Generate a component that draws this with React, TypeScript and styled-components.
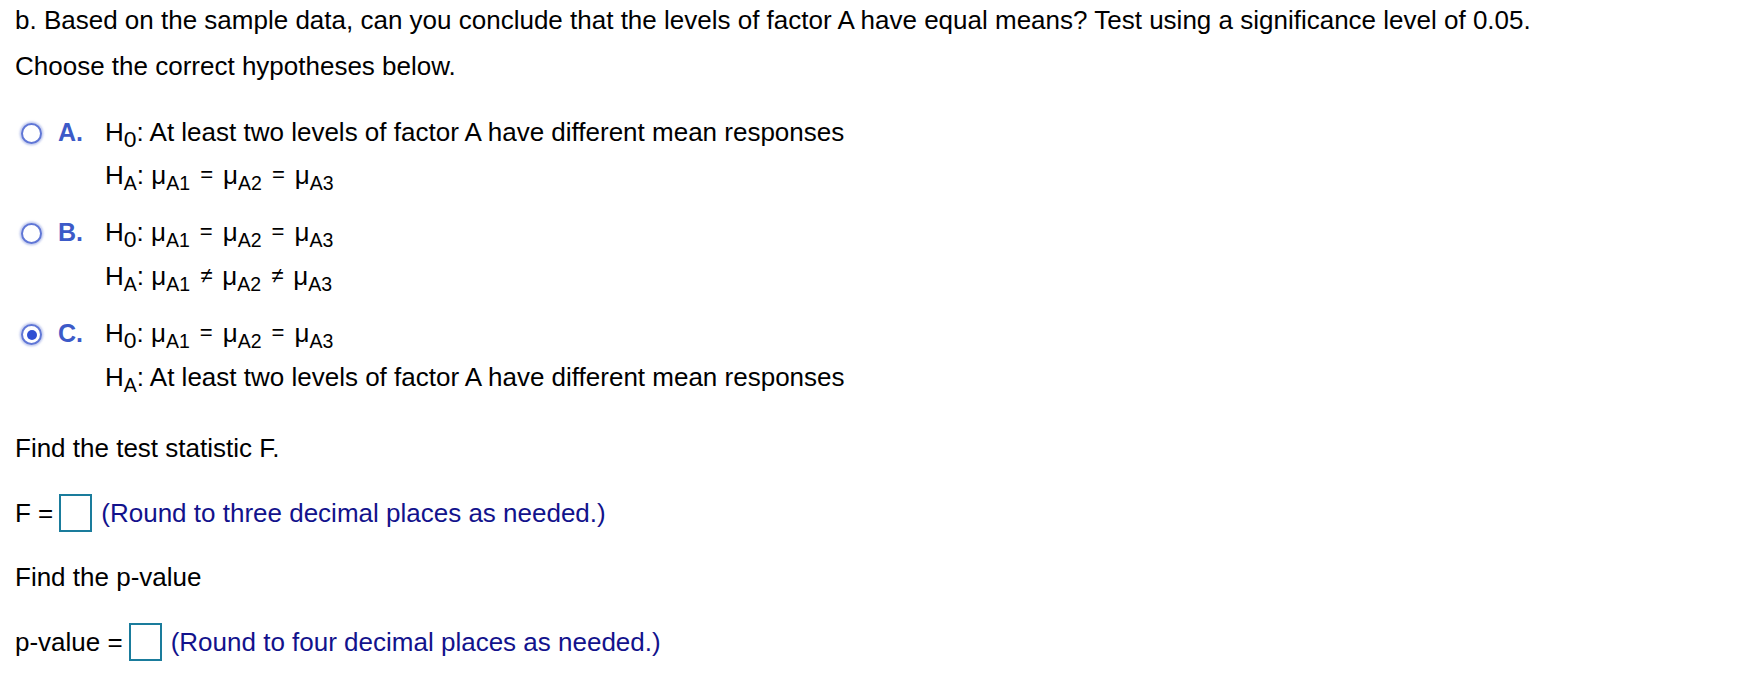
import React from "react";
import styled, { createGlobalStyle } from "styled-components";

const Global = createGlobalStyle`
  html, body { margin: 0; padding: 0; background: #ffffff; }
  body { font-family: "Liberation Sans", Arial, Helvetica, sans-serif; color: #000; }
`;

const Page = styled.div`
  display: flex;
  flex-direction: column;
  padding: 5px 0 0 15px;
  font-size: 26px;
  line-height: 30px;
`;

const Para = styled.div<{ $mt?: number }>`
  margin-top: ${(p) => p.$mt ?? 0}px;
  white-space: nowrap;
`;

const Options = styled.div`
  display: flex;
  flex-direction: column;
  gap: 25px;
  margin-top: 36px;
`;

const Option = styled.div`
  display: flex;
  align-items: flex-start;
`;

const Radio = styled.span<{ $checked?: boolean }>`
  position: relative;
  flex: none;
  box-sizing: border-box;
  width: 21px;
  height: 21px;
  margin: 6px 16px 0 6px;
  border-radius: 50%;
  border: 2px solid #6077d6;
  box-shadow: 0 0 2px 1.5px rgba(110, 130, 215, 0.4);
  background: #fff;
  &::after {
    content: "";
    display: ${(p) => (p.$checked ? "block" : "none")};
    position: absolute;
    left: 3.5px;
    top: 3.5px;
    width: 10px;
    height: 10px;
    border-radius: 50%;
    background: #2f4fd3;
  }
`;

const Letter = styled.span`
  flex: none;
  width: 47px;
  font-size: 25px;
  font-weight: bold;
  color: #3c5ac8;
`;

const Lines = styled.div`
  display: flex;
  flex-direction: column;
  gap: 12px;
`;

const Line = styled.div`
  white-space: nowrap;
`;

const Sub = styled.span<{ $big?: boolean }>`
  font-size: ${(p) => (p.$big ? "0.88em" : "0.75em")};
  position: relative;
  top: 6px;
`;

const Eq = styled.span`
  font-size: 0.85em;
  position: relative;
  top: -2px;
  margin: 0 10px;
`;

const AnswerRow = styled.div<{ $mt: number }>`
  display: flex;
  align-items: center;
  margin-top: ${(p) => p.$mt}px;
  white-space: nowrap;
`;

const Box = styled.span`
  flex: none;
  box-sizing: border-box;
  width: 33px;
  height: 38px;
  border: 2px solid #1a7c9c;
  margin: 0 9px 0 6px;
`;

const Hint = styled.span`
  color: #12128c;
`;

const Mu = ({ n }: { n: number }) => (
  <>
    μ<Sub>A{n}</Sub>
  </>
);

const H0 = () => (
  <>
    H<Sub $big>0</Sub>:{" "}
  </>
);

const HA = () => (
  <>
    H<Sub>A</Sub>:{" "}
  </>
);

const Chain = ({ sign }: { sign: string }) => (
  <>
    <Mu n={1} />
    <Eq>{sign}</Eq>
    <Mu n={2} />
    <Eq>{sign}</Eq>
    <Mu n={3} />
  </>
);

const atLeast = "At least two levels of factor A have different mean responses";

export default function App() {
  return (
    <>
      <Global />
      <Page>
        <Para>
          b. Based on the sample data, can you conclude that the levels of factor A have equal means? Test using a
          significance level of 0.05.
        </Para>
        <Para $mt={16}>Choose the correct hypotheses below.</Para>
        <Options>
          <Option>
            <Radio />
            <Letter>A.</Letter>
            <Lines>
              <Line>
                <H0 />
                {atLeast}
              </Line>
              <Line>
                <HA />
                <Chain sign="=" />
              </Line>
            </Lines>
          </Option>
          <Option>
            <Radio />
            <Letter>B.</Letter>
            <Lines>
              <Line>
                <H0 />
                <Chain sign="=" />
              </Line>
              <Line>
                <HA />
                <Chain sign="≠" />
              </Line>
            </Lines>
          </Option>
          <Option>
            <Radio $checked />
            <Letter>C.</Letter>
            <Lines>
              <Line>
                <H0 />
                <Chain sign="=" />
              </Line>
              <Line>
                <HA />
                {atLeast}
              </Line>
            </Lines>
          </Option>
        </Options>
        <Para $mt={39}>Find the test statistic F.</Para>
        <AnswerRow $mt={31}>
          F =<Box />
          <Hint>(Round to three decimal places as needed.)</Hint>
        </AnswerRow>
        <Para $mt={30}>Find the p-value</Para>
        <AnswerRow $mt={31}>
          p-value =<Box />
          <Hint>(Round to four decimal places as needed.)</Hint>
        </AnswerRow>
      </Page>
    </>
  );
}
